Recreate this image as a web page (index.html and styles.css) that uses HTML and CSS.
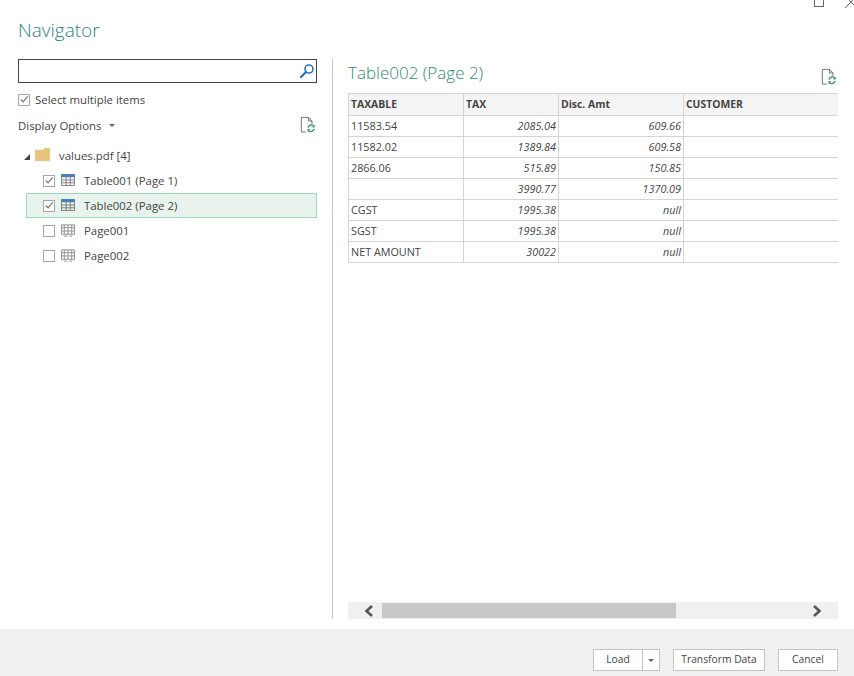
FILE: index.html
```html
<!DOCTYPE html>
<html lang="en">
<head>
<meta charset="utf-8">
<title>Navigator</title>
<link rel="stylesheet" href="styles.css">
</head>
<body>
<div class="dialog">
  <div class="winbtns">
    <span class="win-max"></span>
    <svg class="win-close" width="12" height="12" viewBox="0 0 12 12"><path d="M0 12 L12 0 M0 0 L12 12" stroke="#666" fill="none"/></svg>
  </div>
  <div class="main">
    <h1 class="title">Navigator</h1>
    <div class="panes">
      <div class="left">
        <div class="search">
          <svg width="16" height="16" viewBox="0 0 16 16"><circle cx="10" cy="6" r="4" fill="none" stroke="#2f75b5" stroke-width="1.6"/><path d="M7 9 L2 14" stroke="#2f75b5" stroke-width="2.4" stroke-linecap="round"/></svg>
        </div>
        <label class="multi"><span class="check on"><svg width="11" height="11" viewBox="0 0 11 11"><path d="M2 5.5 L4.5 8 L9.5 2" fill="none" stroke="#777" stroke-width="1.3"/></svg></span>Select multiple items</label>
        <div class="options">
          <span class="opt-label">Display Options</span>
          <span class="caret"></span>
          <svg class="refresh refresh-left" width="16" height="17" viewBox="0 0 18 19"><path d="M6.5 18 H1.5 V1.5 H9.5 L13.5 5.5 V9 M9.5 1.5 V5.5 H13.5" fill="none" stroke="#666"/><path d="M9 13 A4 4 0 0 1 16 11.5 M16 14.5 A4 4 0 0 1 9 16" fill="none" stroke="#3f9b6e" stroke-width="1.6"/><path d="M16.5 9.5 V13 H13.5 M8.5 18 V14.5 H11.5" fill="#3f9b6e"/></svg>
        </div>
        <ul class="tree">
          <li class="node root">
            <span class="twisty"></span>
            <svg class="folder" width="15" height="13" viewBox="0 0 16 14"><path d="M0 2 H9 L10 0 H15 Q16 0 16 1 V14 H0 Z" fill="#e8c47f"/></svg>
            <span class="name">values.pdf [4]</span>
          </li>
          <li class="node item">
            <span class="check on"><svg width="11" height="11" viewBox="0 0 11 11"><path d="M2 5.5 L4.5 8 L9.5 2" fill="none" stroke="#777" stroke-width="1.3"/></svg></span>
            <svg class="ticon" width="14" height="12" viewBox="0 0 15 13"><rect x="0" y="0" width="15" height="3.5" fill="#4a7fb8"/><path d="M.5 3 V12.5 H14.5 V3 M.5 6.5 H14.5 M.5 9.5 H14.5 M5.5 3 V12.5 M10 3 V12.5" fill="none" stroke="#777"/></svg>
            <span class="name">Table001 (Page 1)</span>
          </li>
          <li class="node item selected">
            <span class="check on"><svg width="11" height="11" viewBox="0 0 11 11"><path d="M2 5.5 L4.5 8 L9.5 2" fill="none" stroke="#777" stroke-width="1.3"/></svg></span>
            <svg class="ticon" width="14" height="12" viewBox="0 0 15 13"><rect x="0" y="0" width="15" height="3.5" fill="#4a7fb8"/><path d="M.5 3 V12.5 H14.5 V3 M.5 6.5 H14.5 M.5 9.5 H14.5 M5.5 3 V12.5 M10 3 V12.5" fill="none" stroke="#777"/></svg>
            <span class="name">Table002 (Page 2)</span>
          </li>
          <li class="node item">
            <span class="check"></span>
            <svg class="ticon" width="14" height="13" viewBox="0 0 15 13"><path d="M.5 .5 H14.5 V10.5 H.5 Z M.5 3.5 H14.5 M.5 7 H14.5 M3.5 .5 V10.5 M7.5 .5 V10.5 M11.5 .5 V10.5 M3 12.5 H7 M9 12.5 H12" fill="none" stroke="#8a8a8a"/></svg>
            <span class="name">Page001</span>
          </li>
          <li class="node item">
            <span class="check"></span>
            <svg class="ticon" width="14" height="13" viewBox="0 0 15 13"><path d="M.5 .5 H14.5 V10.5 H.5 Z M.5 3.5 H14.5 M.5 7 H14.5 M3.5 .5 V10.5 M7.5 .5 V10.5 M11.5 .5 V10.5 M3 12.5 H7 M9 12.5 H12" fill="none" stroke="#8a8a8a"/></svg>
            <span class="name">Page002</span>
          </li>
        </ul>
      </div>
      <div class="right">
        <div class="right-head">
          <h2 class="subtitle">Table002 (Page 2)</h2>
          <svg class="refresh" width="16" height="17" viewBox="0 0 18 19"><path d="M6.5 18 H1.5 V1.5 H9.5 L13.5 5.5 V9 M9.5 1.5 V5.5 H13.5" fill="none" stroke="#666"/><path d="M9 13 A4 4 0 0 1 16 11.5 M16 14.5 A4 4 0 0 1 9 16" fill="none" stroke="#3f9b6e" stroke-width="1.6"/><path d="M16.5 9.5 V13 H13.5 M8.5 18 V14.5 H11.5" fill="#3f9b6e"/></svg>
        </div>
        <div class="table-wrap">
          <table class="grid">
            <colgroup><col class="c1"><col class="c2"><col class="c3"><col class="c4"></colgroup>
            <thead><tr><th>TAXABLE</th><th>TAX</th><th>Disc. Amt</th><th class="open">CUSTOMER</th></tr></thead>
            <tbody>
              <tr><td>11583.54</td><td class="num">2085.04</td><td class="num">609.66</td><td class="open"></td></tr>
              <tr><td>11582.02</td><td class="num">1389.84</td><td class="num">609.58</td><td class="open"></td></tr>
              <tr><td>2866.06</td><td class="num">515.89</td><td class="num">150.85</td><td class="open"></td></tr>
              <tr><td></td><td class="num">3990.77</td><td class="num">1370.09</td><td class="open"></td></tr>
              <tr><td>CGST</td><td class="num">1995.38</td><td class="num">null</td><td class="open"></td></tr>
              <tr><td>SGST</td><td class="num">1995.38</td><td class="num">null</td><td class="open"></td></tr>
              <tr><td>NET AMOUNT</td><td class="num">30022</td><td class="num">null</td><td class="open"></td></tr>
            </tbody>
          </table>
        </div>
        <div class="scrollbar">
          <span class="arrow-cell arrow-prev"><svg width="12" height="12" viewBox="0 0 12 12"><path d="M9 1 L3.5 6 L9 11" fill="none" stroke="#555" stroke-width="2.6"/></svg></span>
          <span class="thumb"></span>
          <span class="track"></span>
          <span class="arrow-cell arrow-next"><svg width="12" height="12" viewBox="0 0 12 12"><path d="M3 1 L8.5 6 L3 11" fill="none" stroke="#555" stroke-width="2.6"/></svg></span>
        </div>
      </div>
    </div>
  </div>
  <div class="footer">
    <div class="split">
      <button class="btn load">Load</button>
      <button class="btn drop"><span class="caret small"></span></button>
    </div>
    <button class="btn transform">Transform Data</button>
    <button class="btn cancel">Cancel</button>
  </div>
</div>
</body>
</html>
```

FILE: styles.css
```css
* { box-sizing: border-box; }
html, body { margin: 0; height: 100%; background: #fff; overflow: hidden; }
body { font-family: "Open Sans", "Noto Sans", sans-serif; font-size: 11.4px; color: #444; }

.dialog { position: relative; width: 854px; height: 676px; display: flex; flex-direction: column; }

.winbtns { position: absolute; top: -3px; right: 0; display: flex; gap: 21px; align-items: flex-start; }
.win-max { display: block; width: 10px; height: 10px; border: 1px solid #666; }
.win-close { margin-top: -1px; margin-right: -3px; }

.main { flex: 1; display: flex; flex-direction: column; min-height: 0; padding-bottom: 10px; }
.title { margin: 0; padding: 18px 0 0 18px; height: 59px; font-size: 19px; font-weight: 300; line-height: 25px; color: #2f7f8c; }
.panes { flex: 1; display: flex; min-height: 0; }

.left { width: 333px; padding: 0 15px 0 18px; border-right: 1px solid #c6c6c6; }
.search { height: 24px; width: 299px; border: 1px solid #444; display: flex; justify-content: flex-end; align-items: center; padding-right: 1px; }
.multi { display: flex; align-items: center; gap: 5px; height: 17px; margin-top: 8px; line-height: 17px; }
.check { width: 12px; height: 12px; border: 1px solid #a6a6a6; background: #fff; display: flex; align-items: center; justify-content: center; flex: none; }
.options { display: flex; align-items: center; height: 20px; margin-top: 7px; width: 299px; }
.caret { width: 0; height: 0; border: 3px solid transparent; border-top: 3px solid #666; border-bottom: 0; margin-left: 8px; }
.caret.small { margin: 0; display: block; border-width: 3px 3px 0; }
.refresh-left { margin-left: auto; margin-right: 1px; margin-top: -1px; }

.tree { list-style: none; margin: 0 0 0 8px; padding: 8px 0 0; width: 291px; }
.node { display: flex; align-items: center; height: 25px; border: 1px solid transparent; }
.twisty { width: 0; height: 0; border-style: solid; border-width: 0 0 6px 6px; border-color: transparent transparent #444 transparent; margin: 2px 5px 0 -3px; }
.folder { margin-right: 9px; margin-top: -3px; }
.item { padding-left: 16px; }
.item .ticon { margin-left: 6px; margin-right: 9px; margin-top: -1px; }
.selected { background: #e8f3ed; border-color: #9dd9b5; }
.name { white-space: nowrap; }

.right { flex: 1; padding: 0 16px 0 15px; display: flex; flex-direction: column; min-width: 0; }
.right-head { display: flex; justify-content: space-between; height: 34px; }
.subtitle { margin: 0; font-size: 17px; font-weight: 300; line-height: 28px; color: #2f8a72; white-space: nowrap; }
.right-head .refresh { margin-top: 9px; margin-right: 1px; }

.table-wrap { flex: 1; overflow: hidden; min-height: 0; }
.grid { border-collapse: collapse; table-layout: fixed; width: 490px; font-size: 10.8px; color: #444; }
.c1 { width: 115px; } .c2 { width: 95px; } .c3 { width: 125px; } .c4 { width: 155px; }
.grid th, .grid td { border: 1px solid #d4d4d4; padding: 0 2px; height: 21px; line-height: 14px; text-align: left; white-space: nowrap; }
.grid th { height: 22px; padding-bottom: 2px; background: #f4f4f4; font-weight: 700; font-size: 10.4px; }
.grid .num { text-align: right; font-style: italic; }
.grid .open { border-right: 0; }

.scrollbar { height: 17px; background: #f0f0f0; display: flex; align-items: stretch; }
.arrow-cell { width: 34px; flex: none; display: flex; align-items: center; justify-content: center; }
.arrow-prev { padding-left: 8px; }
.arrow-next { padding-right: 8px; }
.thumb { width: 294px; margin: 1px 0; background: #c8c8c8; }
.track { flex: 1; }

.footer { height: 47px; flex: none; background: #f0f0f0; display: flex; justify-content: flex-end; align-items: flex-start; padding: 20px 16px 0 0; gap: 13px; }
.split { display: flex; }
.btn { height: 22px; padding: 0 0 2px; margin: 0; background: #fff; border: 1px solid #c4c4c4; font: inherit; font-size: 10.3px; color: #444; display: flex; align-items: center; justify-content: center; }
.load { width: 50px; }
.drop { width: 18px; margin-left: -1px; padding: 0; }
.transform { width: 92px; }
.cancel { width: 60px; }
```
